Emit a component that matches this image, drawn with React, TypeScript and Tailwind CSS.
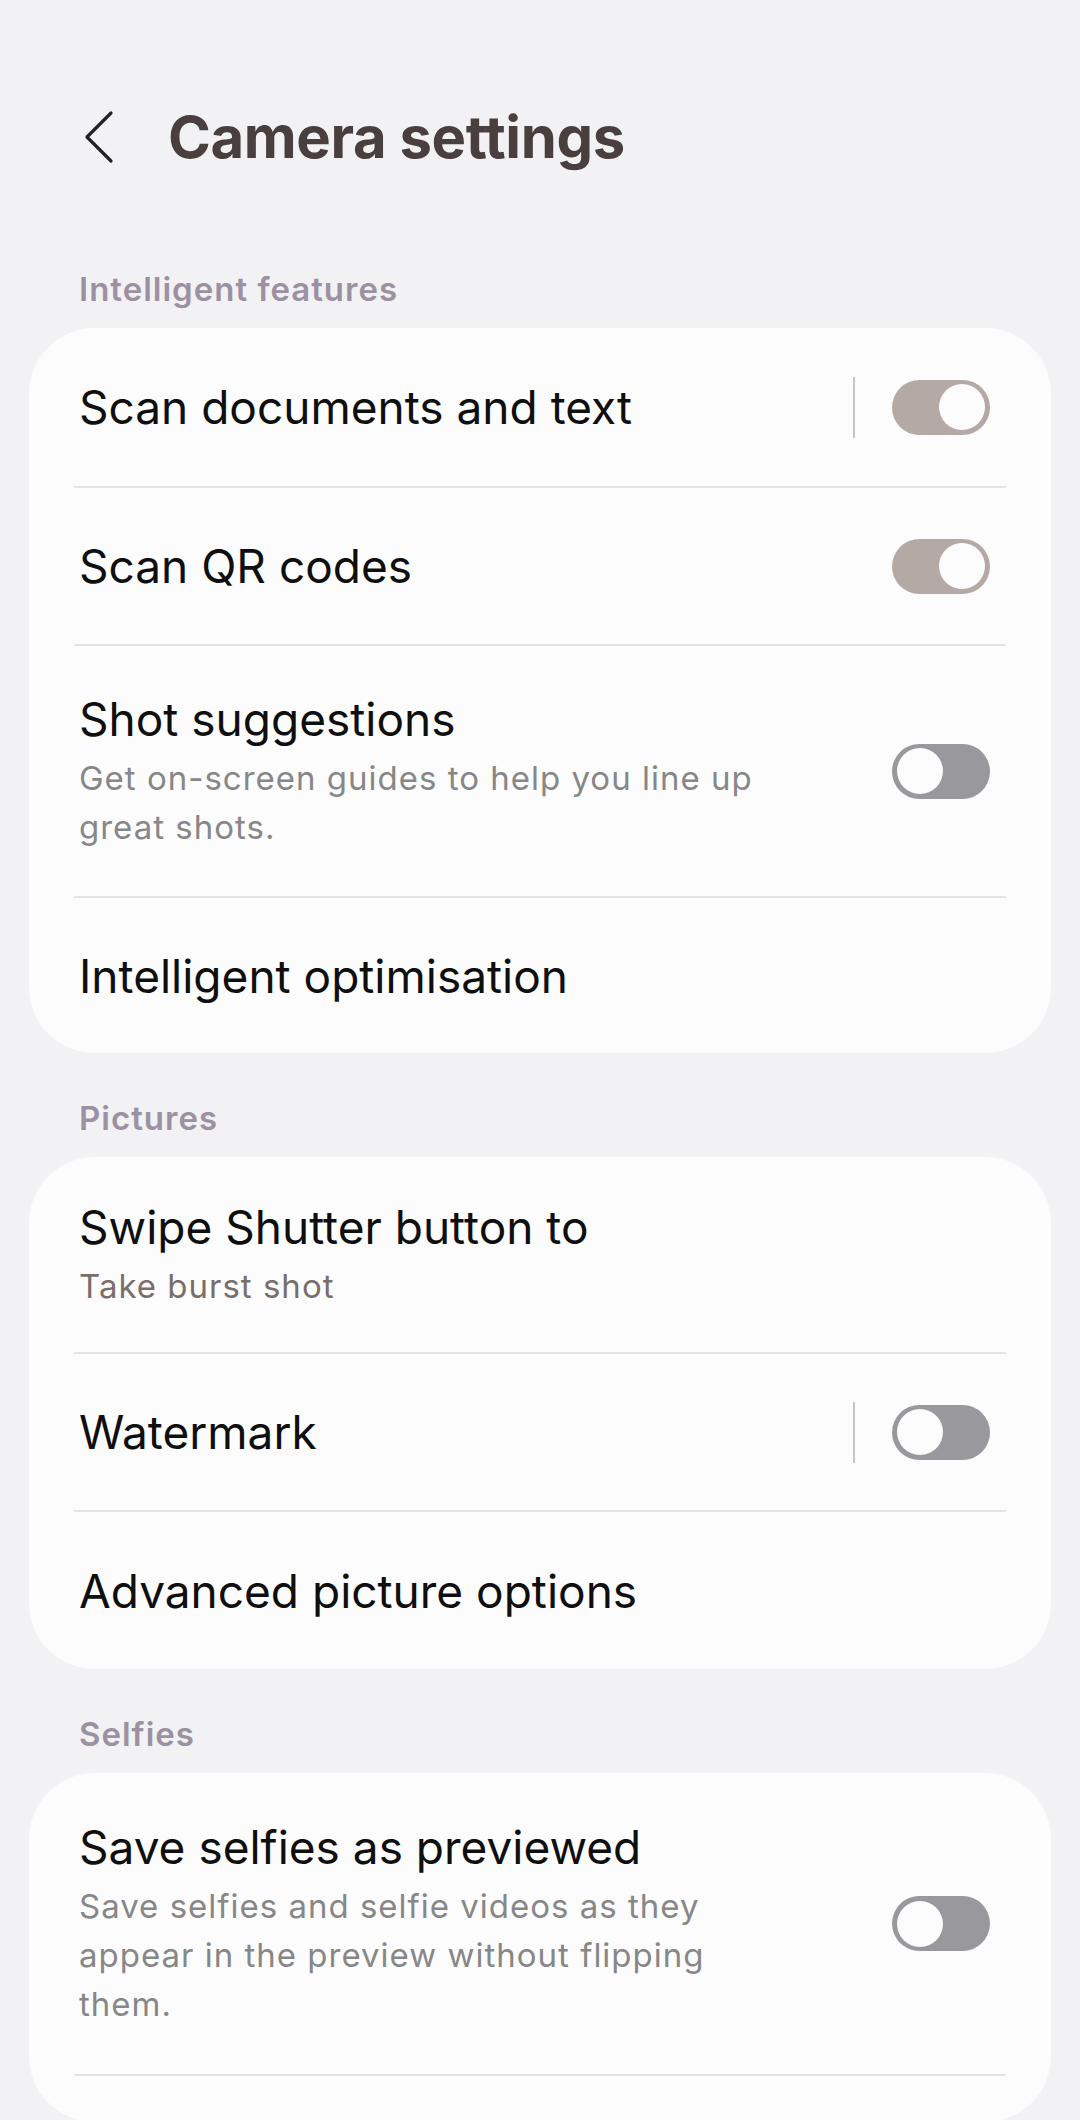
import React from 'react';

const font = { fontFamily: 'Inter, Roboto, "Noto Sans", sans-serif' };

const Toggle: React.FC<{ on?: boolean }> = ({ on }) => (
  <div
    className={`flex h-[55px] w-[98px] shrink-0 items-center rounded-full px-[5px] ${
      on ? 'justify-end bg-[#b5a9a6]' : 'justify-start bg-[#98989d]'
    }`}
  >
    <div className="h-[46px] w-[46px] rounded-full bg-[#fcfcfc]" />
  </div>
);

const Divider = () => <div className="h-[2px] bg-[#e3e3e3]" />;

const Row: React.FC<{
  title: string;
  sub?: string;
  subTone?: 'gray' | 'brown';
  toggle?: 'on' | 'off';
  sep?: boolean;
  h: string;
}> = ({ title, sub, subTone = 'gray', toggle, sep, h }) => (
  <div className={`flex items-center ${h}`}>
    <div className="flex min-w-0 flex-1 flex-col pl-[5px]">
      <span className="text-[46px] leading-[56px] text-[#0f0f0f]">{title}</span>
      {sub && (
        <span
          className={`mt-[7px] max-w-[692px] text-[33px] leading-[49px] tracking-[1px] ${
            subTone === 'brown' ? 'text-[#7a6e6b]' : 'text-[#878787]'
          }`}
        >
          {sub}
        </span>
      )}
    </div>
    {sep && <div className="mr-[37px] h-[61px] w-[2px] bg-[#c9c3c2]" />}
    {toggle && (
      <div className="mr-[16px]">
        <Toggle on={toggle === 'on'} />
      </div>
    )}
  </div>
);

const Header: React.FC<{ label: string; top: string }> = ({ label, top }) => (
  <div
    className={`${top} pb-[19px] pl-[79px] text-[33px] font-semibold leading-[40px] tracking-[1px] text-[#9c91a3]`}
  >
    {label}
  </div>
);

const Card: React.FC<{ children: React.ReactNode }> = ({ children }) => (
  <div className="mx-[29px] rounded-[66px] bg-[#fcfcfc] px-[45px]">{children}</div>
);

export default function App() {
  return (
    <div className="min-h-[2120px] w-[1080px] overflow-hidden bg-[#f2f2f4]" style={font}>
      {/* Top bar */}
      <div className="mt-[105px] flex h-[64px] items-center">
        <svg className="ml-[80px]" width="40" height="56" viewBox="0 0 40 56" fill="none">
          <path d="M31 4 L7 28 L31 52" stroke="#222" strokeWidth="3.2" strokeLinecap="round" strokeLinejoin="round" />
        </svg>
        <h1 className="ml-[48px] text-[58px] font-bold leading-[64px] tracking-[-0.4px] text-[#4a3f3f]">
          Camera settings
        </h1>
      </div>

      {/* Intelligent features */}
      <Header label="Intelligent features" top="pt-[100px]" />
      <Card>
        <Row title="Scan documents and text" toggle="on" sep h="h-[158px]" />
        <Divider />
        <Row title="Scan QR codes" toggle="on" h="h-[156px]" />
        <Divider />
        <Row
          title="Shot suggestions"
          sub="Get on-screen guides to help you line up great shots."
          toggle="off"
          h="h-[250px]"
        />
        <Divider />
        <Row title="Intelligent optimisation" h="h-[155px]" />
      </Card>

      {/* Pictures */}
      <Header label="Pictures" top="pt-[45px]" />
      <Card>
        <Row title="Swipe Shutter button to" sub="Take burst shot" subTone="brown" h="h-[195px]" />
        <Divider />
        <Row title="Watermark" toggle="off" sep h="h-[156px]" />
        <Divider />
        <Row title="Advanced picture options" h="h-[157px]" />
      </Card>

      {/* Selfies */}
      <Header label="Selfies" top="pt-[45px]" />
      <Card>
        <Row
          title="Save selfies as previewed"
          sub="Save selfies and selfie videos as they appear in the preview without flipping them."
          toggle="off"
          h="h-[301px]"
        />
        <Divider />
        <div className="h-[46px]" />
      </Card>
    </div>
  );
}
